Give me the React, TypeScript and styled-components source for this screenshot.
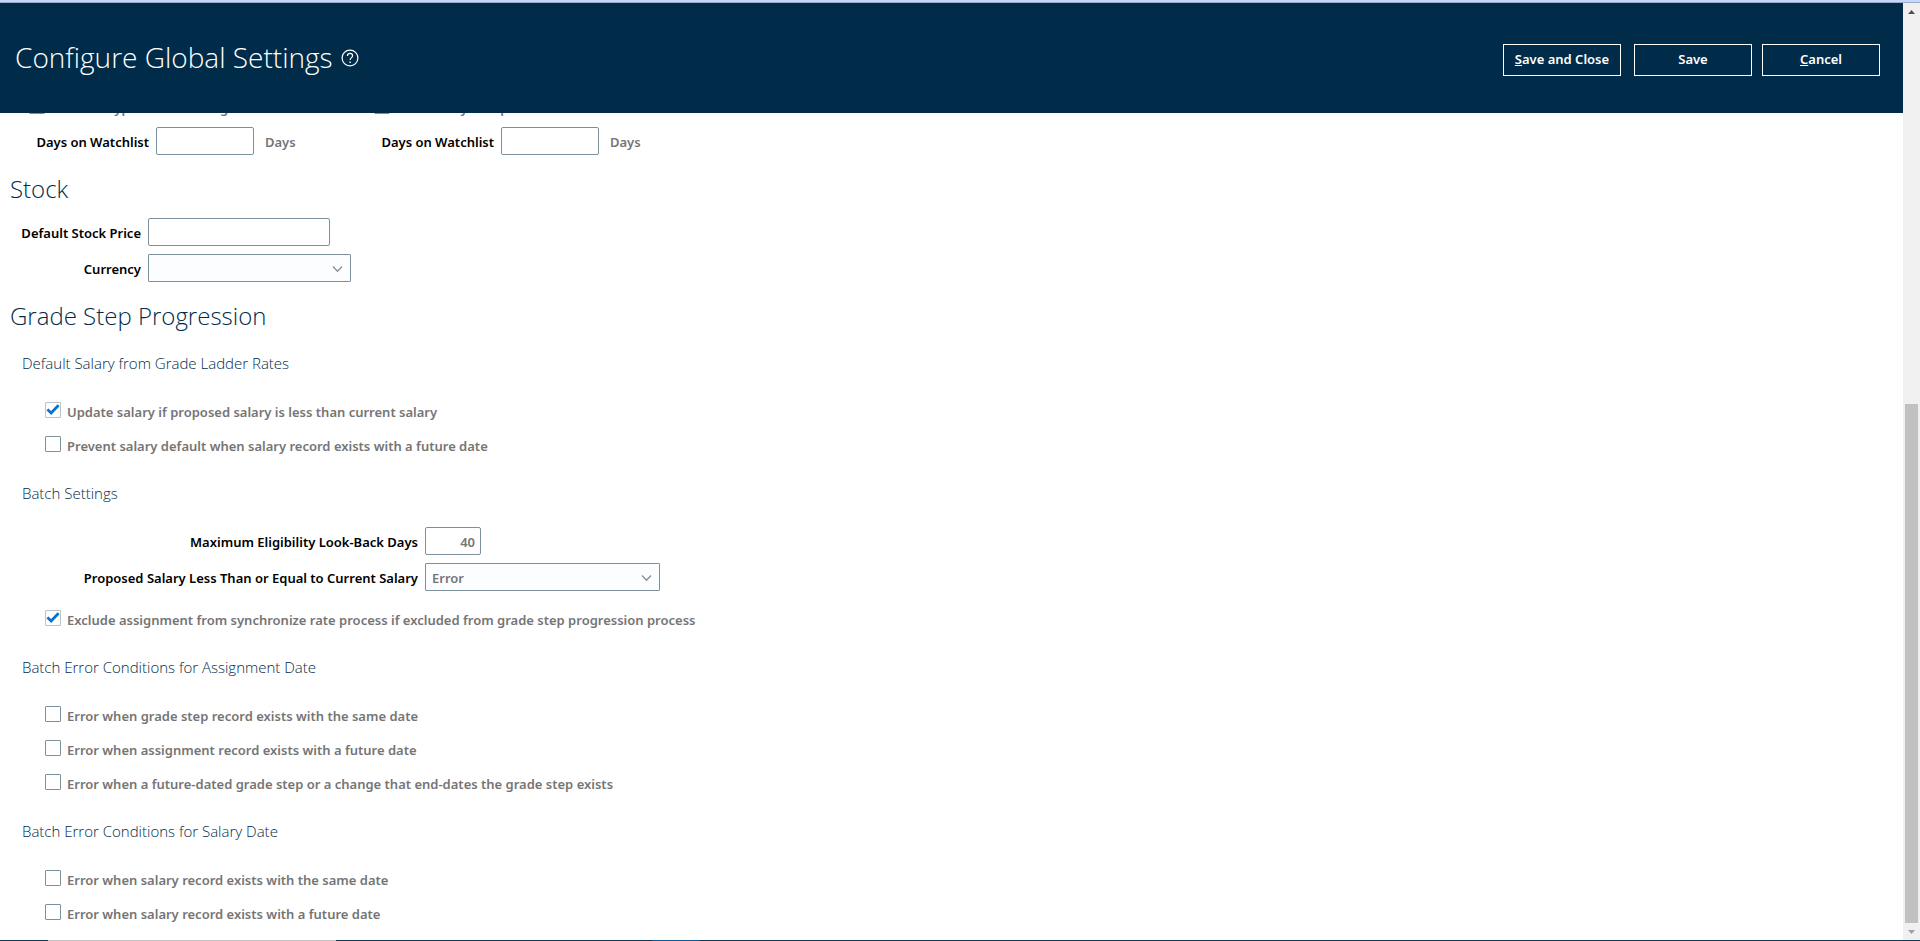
import React, { useId, useState } from 'react';
import styled, { createGlobalStyle } from 'styled-components';

const color = {
  navy: '#002c4a',
  heading: '#002c4a',
  label: '#000000',
  muted: '#757575',
  border: '#7d919d',
  borderSoft: '#b4c3cd',
  check: '#0572ce',
};

const headingFont = '"Open Sans", "Noto Sans", sans-serif';

const GlobalStyle = createGlobalStyle`
  * { box-sizing: border-box; }
  body {
    margin: 0;
    background: #ffffff;
    font-family: "Noto Sans", "Open Sans", sans-serif;
    font-size: 13px;
    line-height: 20px;
  }
  button, input, select { font: inherit; }
`;

const Page = styled.div`
  display: flex;
  flex-direction: column;
  min-height: 100vh;
`;

const BrowserEdge = styled.div`
  height: 3px;
  background: #c7d7f7;
  border-bottom: 1px solid #9aaac8;
`;

const Body = styled.div`
  display: grid;
  grid-template-columns: minmax(0, 1fr) 17px;
  flex: 1;
`;

const TaskbarEdge = styled.div`
  height: 1px;
  background: linear-gradient(
    to right,
    #0b3c5d 48px,
    #c3c3c3 48px 336px,
    #0b3c5d 336px 652px,
    #0a5a9c 652px 700px,
    #0b3c5d 700px
  );
`;

const Header = styled.header`
  display: flex;
  align-items: center;
  justify-content: space-between;
  height: 110px;
  padding: 0 23px 0 15px;
  background: ${color.navy};
  color: #ffffff;
`;

const TitleGroup = styled.div`
  display: flex;
  align-items: center;
  gap: 8px;
`;

const Title = styled.h1`
  margin: 0;
  padding-bottom: 2px;
  font-family: ${headingFont};
  font-size: 28px;
  line-height: 38px;
  font-weight: 300;
`;

const HelpButton = styled.button`
  display: flex;
  width: 18px;
  height: 18px;
  padding: 0;
  border: 0;
  background: none;
  color: inherit;
  cursor: pointer;
`;

const Actions = styled.div`
  display: flex;
  gap: 10px;
  padding-top: 4px;
`;

const ActionButton = styled.button`
  width: 118px;
  height: 32px;
  padding: 0 0 2px;
  border: 1px solid #ffffff;
  background: transparent;
  color: #ffffff;
  font-weight: 600;
  line-height: 20px;
  white-space: nowrap;
  cursor: pointer;

  &:first-child {
    margin-right: 3px;
  }
`;

const Viewport = styled.div`
  overflow: hidden;
`;

const Form = styled.form`
  margin-top: -15px;
  padding: 0 10px 16px;
`;

const WatchlistGrid = styled.div`
  display: grid;
  grid-template-columns: repeat(2, 345px);
  row-gap: 9px;
`;

const SectionTitle = styled.h2<{ $bottom: number }>`
  margin: 18px 0 ${(p) => p.$bottom}px;
  color: ${color.heading};
  font-family: ${headingFont};
  font-size: 24px;
  line-height: 32px;
  font-weight: 300;
`;

const GroupTitle = styled.h3<{ $bottom?: number }>`
  margin: 0 0 ${(p) => p.$bottom ?? 29}px 12px;
  color: ${color.heading};
  font-family: ${headingFont};
  font-size: 15px;
  line-height: 20px;
  font-weight: 300;
`;

const Group = styled.section`
  & + & {
    margin-top: 27px;
  }
`;

const FieldList = styled.div`
  display: flex;
  flex-direction: column;
  gap: 8px;
`;

const FieldRow = styled.div<{ $label: number }>`
  display: grid;
  grid-template-columns: ${(p) => p.$label}px auto auto;
  justify-content: start;
  align-items: center;
  column-gap: 7px;
`;

const FieldLabel = styled.label`
  padding-top: 2px;
  color: ${color.label};
  font-weight: 600;
  text-align: right;
  white-space: nowrap;
`;

const Unit = styled.span`
  padding: 2px 0 0 4px;
  color: ${color.muted};
  font-weight: 600;
`;

const TextInput = styled.input<{ $width: number }>`
  width: ${(p) => p.$width}px;
  height: 28px;
  padding: 2px 5px 0;
  border: 1px solid ${color.border};
  border-radius: 2px;
  background: #ffffff;
  color: ${color.muted};
  font-weight: 600;
  text-align: right;
`;

const SelectFrame = styled.div<{ $width: number }>`
  position: relative;
  width: ${(p) => p.$width}px;
`;

const SelectInput = styled.select`
  display: block;
  appearance: none;
  width: 100%;
  height: 28px;
  padding: 2px 24px 0 6px;
  border: 1px solid ${color.border};
  border-radius: 1px;
  background: #fcfdff;
  color: ${color.muted};
  font-weight: 600;
`;

const Chevron = styled.svg`
  position: absolute;
  top: 11px;
  right: 8px;
  pointer-events: none;
`;

const CheckList = styled.div<{ $top?: number }>`
  display: flex;
  flex-direction: column;
  align-items: flex-start;
  gap: 14px;
  margin: ${(p) => p.$top ?? 0}px 0 0 35px;
`;

const CheckLabel = styled.label`
  display: flex;
  align-items: flex-start;
  gap: 6px;
  color: ${color.muted};
  font-weight: 600;
  white-space: nowrap;
`;

const CheckCell = styled.div`
  padding-left: 19px;
`;

const CheckFrame = styled.span`
  display: grid;
  width: 16px;
  height: 16px;

  > * {
    grid-area: 1 / 1;
  }
`;

const CheckInput = styled.input`
  appearance: none;
  width: 16px;
  height: 16px;
  margin: 0;
  border: 1px solid ${color.border};
  border-radius: 1px;
  background: #ffffff;

  &:checked {
    border-color: ${color.borderSoft};
  }
`;

const CheckMark = styled.svg`
  pointer-events: none;
`;

const Scrollbar = styled.div`
  display: flex;
  flex-direction: column;
  background: #f0f0f0;
`;

const ScrollArrow = styled.div<{ $dim?: boolean }>`
  display: flex;
  align-items: center;
  justify-content: center;
  height: 17px;
  color: ${(p) => (p.$dim ? '#a0a0a0' : '#505050')};
`;

const ScrollTrack = styled.div`
  display: flex;
  flex-direction: column;
  flex: 1;
  padding: 0 2px;
`;

const ScrollGap = styled.div`
  flex: 384;
`;

const ScrollThumb = styled.div`
  flex: 519;
  background: #c1c1c1;
`;

function CheckField({ text, on = false }: { text: string; on?: boolean }) {
  const [checked, setChecked] = useState(on);
  return (
    <CheckLabel>
      <CheckFrame>
        <CheckInput type="checkbox" checked={checked} onChange={(e) => setChecked(e.target.checked)} />
        {checked && (
          <CheckMark width="16" height="16" viewBox="0 0 16 16" fill="none">
            <path d="M2.4 7.4 6.1 11 13.6 3.2" stroke={color.check} strokeWidth="2.7" />
          </CheckMark>
        )}
      </CheckFrame>
      {text}
    </CheckLabel>
  );
}

type InputFieldProps = { label: string; labelWidth: number; width: number; value?: string; unit?: string };

function InputField({ label, labelWidth, width, value = '', unit }: InputFieldProps) {
  const id = useId();
  return (
    <FieldRow $label={labelWidth}>
      <FieldLabel htmlFor={id}>{label}</FieldLabel>
      <TextInput id={id} type="text" $width={width} defaultValue={value} />
      {unit && <Unit>{unit}</Unit>}
    </FieldRow>
  );
}

type SelectFieldProps = { label: string; labelWidth: number; width: number; option: string };

function SelectField({ label, labelWidth, width, option }: SelectFieldProps) {
  const id = useId();
  return (
    <FieldRow $label={labelWidth}>
      <FieldLabel htmlFor={id}>{label}</FieldLabel>
      <SelectFrame $width={width}>
        <SelectInput id={id}>
          <option>{option}</option>
        </SelectInput>
        <Chevron width="11" height="8" viewBox="0 0 11 8" fill="none" aria-hidden="true">
          <path d="M1 1.5 5.5 6.2 10 1.5" stroke="#8a8f93" strokeWidth="1.3" />
        </Chevron>
      </SelectFrame>
    </FieldRow>
  );
}

export default function App() {
  return (
    <Page>
      <GlobalStyle />
      <BrowserEdge />
      <Body>
        <main>
          <Header>
            <TitleGroup>
              <Title>Configure Global Settings</Title>
              <HelpButton type="button" aria-label="Help">
                <svg width="18" height="18" viewBox="0 0 18 18" fill="none" stroke="currentColor">
                  <circle cx="9" cy="9" r="7.9" strokeWidth="1.2" />
                  <path d="M6.4 6.9c0-1.6 1.1-2.6 2.6-2.6s2.6 1 2.6 2.4c0 1.9-2.5 2-2.5 4.3" strokeWidth="1.2" />
                  <path d="M9.1 12.4v1.5" strokeWidth="1.4" />
                </svg>
              </HelpButton>
            </TitleGroup>
            <Actions>
              <ActionButton type="button">
                <u>S</u>ave and Close
              </ActionButton>
              <ActionButton type="button">Save</ActionButton>
              <ActionButton type="button">
                <u>C</u>ancel
              </ActionButton>
            </Actions>
          </Header>
          <Viewport>
            <Form>
              <WatchlistGrid>
                <CheckCell>
                  <CheckField text="Contract type dates missing" />
                </CheckCell>
                <CheckCell>
                  <CheckField text="Base salary rate paid" />
                </CheckCell>
                <InputField label="Days on Watchlist" labelWidth={139} width={98} unit="Days" />
                <InputField label="Days on Watchlist" labelWidth={139} width={98} unit="Days" />
              </WatchlistGrid>

              <SectionTitle $bottom={13}>Stock</SectionTitle>
              <FieldList>
                <InputField label="Default Stock Price" labelWidth={131} width={182} />
                <SelectField label="Currency" labelWidth={131} width={203} option="" />
              </FieldList>

              <SectionTitle $bottom={21}>Grade Step Progression</SectionTitle>
              <Group>
                <GroupTitle>Default Salary from Grade Ladder Rates</GroupTitle>
                <CheckList>
                  <CheckField on text="Update salary if proposed salary is less than current salary" />
                  <CheckField text="Prevent salary default when salary record exists with a future date" />
                </CheckList>
              </Group>
              <Group>
                <GroupTitle $bottom={24}>Batch Settings</GroupTitle>
                <FieldList>
                  <InputField label="Maximum Eligibility Look-Back Days" labelWidth={408} width={56} value="40" />
                  <SelectField
                    label="Proposed Salary Less Than or Equal to Current Salary"
                    labelWidth={408}
                    width={235}
                    option="Error"
                  />
                </FieldList>
                <CheckList $top={19}>
                  <CheckField
                    on
                    text="Exclude assignment from synchronize rate process if excluded from grade step progression process"
                  />
                </CheckList>
              </Group>
              <Group>
                <GroupTitle>Batch Error Conditions for Assignment Date</GroupTitle>
                <CheckList>
                  <CheckField text="Error when grade step record exists with the same date" />
                  <CheckField text="Error when assignment record exists with a future date" />
                  <CheckField text="Error when a future-dated grade step or a change that end-dates the grade step exists" />
                </CheckList>
              </Group>
              <Group>
                <GroupTitle>Batch Error Conditions for Salary Date</GroupTitle>
                <CheckList>
                  <CheckField text="Error when salary record exists with the same date" />
                  <CheckField text="Error when salary record exists with a future date" />
                </CheckList>
              </Group>
            </Form>
          </Viewport>
        </main>
        <Scrollbar aria-hidden="true">
          <ScrollArrow>
            <svg width="7" height="4" viewBox="0 0 7 4" fill="currentColor">
              <path d="M3.5 0 7 4H0z" />
            </svg>
          </ScrollArrow>
          <ScrollTrack>
            <ScrollGap />
            <ScrollThumb />
          </ScrollTrack>
          <ScrollArrow $dim>
            <svg width="7" height="4" viewBox="0 0 7 4" fill="currentColor">
              <path d="M0 0h7L3.5 4z" />
            </svg>
          </ScrollArrow>
        </Scrollbar>
      </Body>
      <TaskbarEdge />
    </Page>
  );
}
